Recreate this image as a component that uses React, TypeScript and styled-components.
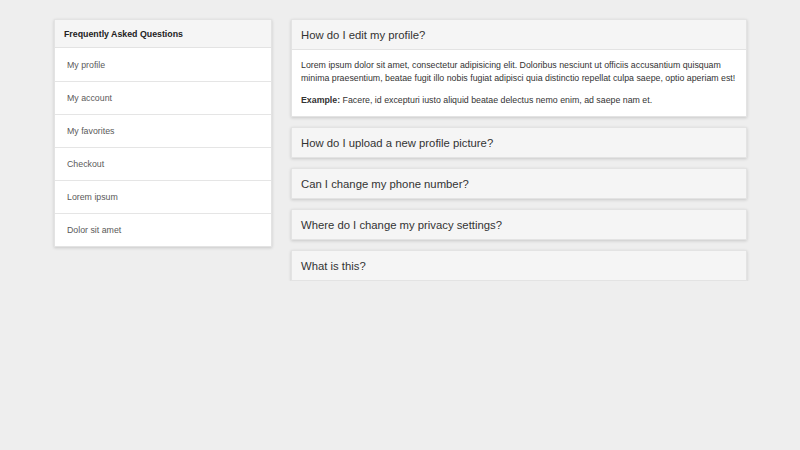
import React from "react";
import styled, { createGlobalStyle } from "styled-components";

const Global = createGlobalStyle`
  html, body { margin: 0; padding: 0; background: #eeeeee; }
  body { font-family: "Liberation Sans", Arial, sans-serif; color: #333; }
`;

const Page = styled.div`
  display: flex;
  align-items: flex-start;
  gap: 19px;
  padding: 19px 0 0 54px;
`;

const Card = styled.div<{ $w: number }>`
  width: ${(p) => p.$w}px;
  background: #fff;
  box-shadow: 0 1px 3px rgba(0, 0, 0, 0.16);
  border: 1px solid #e3e3e3;
  box-sizing: border-box;
`;

const SideHeader = styled.div`
  background: #f5f5f5;
  height: 28px;
  box-sizing: border-box;
  border-bottom: 1px solid #e3e3e3;
  display: flex;
  align-items: center;
  padding-left: 9px;
  font-size: 8.8px;
  font-weight: bold;
  color: #222;
`;

const SideItem = styled.div`
  height: 33px;
  box-sizing: border-box;
  display: flex;
  align-items: center;
  padding-left: 12px;
  font-size: 8.8px;
  color: #5a5a5a;
  border-top: 1px solid #e5e5e5;
  &:first-of-type { border-top: none; }
`;

const Column = styled.div`
  display: flex;
  flex-direction: column;
  gap: 10px;
`;

const QHeader = styled.div`
  background: #f5f5f5;
  height: 29px;
  box-sizing: border-box;
  display: flex;
  align-items: center;
  padding-left: 9px;
  font-size: 11.3px;
  color: #333;
`;

const QBody = styled.div`
  border-top: 1px solid #e3e3e3;
  padding: 9px 9px 9px 9px;
  font-size: 8.8px;
  line-height: 13px;
  color: #333;
  p { margin: 0 0 9px; }
  p:last-child { margin: 0; }
`;

const questions = [
  "How do I edit my profile?",
  "How do I upload a new profile picture?",
  "Can I change my phone number?",
  "Where do I change my privacy settings?",
  "What is this?",
];

const items = ["My profile", "My account", "My favorites", "Checkout", "Lorem ipsum", "Dolor sit amet"];

export default function App() {
  return (
    <>
      <Global />
      <Page>
        <Card $w={218}>
          <SideHeader>Frequently Asked Questions</SideHeader>
          <div>
            {items.map((i) => (
              <SideItem key={i}>{i}</SideItem>
            ))}
          </div>
        </Card>
        <Column>
          {questions.map((q, idx) => (
            <Card $w={456} key={q}>
              <QHeader>{q}</QHeader>
              {idx === 0 && (
                <QBody>
                  <p>
                    Lorem ipsum dolor sit amet, consectetur adipisicing elit. Doloribus nesciunt ut officiis accusantium quisquam minima praesentium, beatae fugit illo nobis fugiat adipisci quia distinctio repellat culpa saepe, optio aperiam est!
                  </p>
                  <p>
                    <strong>Example:</strong> Facere, id excepturi iusto aliquid beatae delectus nemo enim, ad saepe nam et.
                  </p>
                </QBody>
              )}
            </Card>
          ))}
        </Column>
      </Page>
    </>
  );
}
